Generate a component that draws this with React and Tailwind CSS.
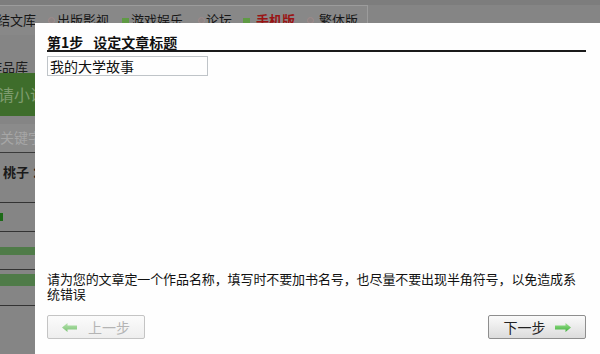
import React from "react";

const font = { fontFamily: '"Noto Sans CJK SC", "Noto Sans", sans-serif' };

function Circle({ ml }) {
  return <span className={`inline-block w-[7px] h-[7px] rounded-full border border-[#a08c8c] bg-[#8d8484] ${ml}`} />;
}
function Square({ ml }) {
  return <span className={`inline-block w-[7px] h-[6px] bg-[#5f9a44] ${ml}`} />;
}

function LeftArrow({ className }) {
  return (
    <svg width="15" height="9" viewBox="0 0 15 9" className={className}>
      <defs>
        <linearGradient id="lg1" x1="0" y1="0" x2="0" y2="1">
          <stop offset="0" stopColor="#b6e3b0" />
          <stop offset="1" stopColor="#7cc374" />
        </linearGradient>
      </defs>
      <path d="M0 4.5 L5.5 0 L5.5 2.5 L15 2.5 L15 6.5 L5.5 6.5 L5.5 9 Z" fill="url(#lg1)" />
    </svg>
  );
}
function RightArrow({ className }) {
  return (
    <svg width="16" height="9" viewBox="0 0 16 9" className={className}>
      <defs>
        <linearGradient id="lg2" x1="0" y1="0" x2="0" y2="1">
          <stop offset="0" stopColor="#9be28f" />
          <stop offset="1" stopColor="#3fae3a" />
        </linearGradient>
      </defs>
      <path d="M16 4.5 L10.5 0 L10.5 2.5 L0 2.5 L0 6.5 L10.5 6.5 L10.5 9 Z" fill="url(#lg2)" />
    </svg>
  );
}

export default function App() {
  return (
    <div className="relative w-[600px] h-[354px] overflow-hidden bg-[#858585]" style={font}>
      {/* background page */}
      <div className="h-[5px] bg-[#7d7d7d]" />
      <div className="w-[368px] h-[30px] bg-[#888888] border-t border-r border-[#9c9c9c] flex items-start pt-[6px] text-[13px] leading-[15px] text-[#161616] whitespace-nowrap">
        <span className="ml-[-3px]">结文库</span>
        <Circle ml="ml-[12px] mt-[5px]" />
        <span className="ml-[2px]">出版影视</span>
        <Square ml="ml-[13px] mt-[6px]" />
        <span className="ml-[2px]">游戏娱乐</span>
        <Circle ml="ml-[15px] mt-[5px]" />
        <span className="ml-[1px]">论坛</span>
        <Square ml="ml-[11px] mt-[6px]" />
        <span className="ml-[6px] font-bold text-[#9a1414]">手机版</span>
        <Circle ml="ml-[12px] mt-[5px]" />
        <span className="ml-[5px]">繁体版</span>
      </div>
      <div className="w-[40px] flex flex-col whitespace-nowrap overflow-hidden">
        <div className="h-[25px]" />
        <div className="h-[13px] text-[13px] leading-[13px] text-[#1c1c1c] ml-[-11px]">作品库 ·</div>
        <div className="h-[43px] bg-[#3e6d2b] text-[16px] leading-[18px] text-[#7f9c6e] pt-[12px]">
          <span className="ml-[-2px]">请小说</span>
        </div>
        <div className="h-[8px]" />
        <div className="h-[28px] bg-[#8b8b8b] text-[14px] leading-[16px] text-[#a6a6a6] pt-[5px]">关键字</div>
        <div className="h-px bg-[#3a3a3a]" />
        <div className="h-[49px] pt-[11px] text-[13px] leading-[15px] font-bold text-[#1a1a1a] pl-[3px]">桃子 ：</div>
        <div className="h-px bg-[#333333]" />
        <div className="h-[28px] flex items-center">
          <span className="block w-[3px] h-[8px] bg-[#1c6a17]" />
        </div>
        <div className="h-px bg-[#333333]" />
        <div className="h-[15px]" />
        <div className="h-[8px] bg-[#4f7b48]" />
        <div className="h-[14px]" />
        <div className="h-px bg-[#333333]" />
        <div className="h-[4px]" />
        <div className="h-[12px] bg-[#4f7b48]" />
        <div className="h-[19px]" />
        <div className="h-px bg-[#333333]" />
      </div>

      {/* dialog */}
      <div className="absolute left-[35px] top-[23px] right-0 bottom-0 bg-[#fefefe] pl-[12px] pr-[14px] pt-[11px]">
        <div className="text-[14px] leading-[16px] font-bold text-[#111] border-b-2 border-[#1a1a1a]">
          第1步<span className="ml-[10px]">设定文章标题</span>
        </div>
        <div className="mt-[4px] w-[161px] h-[20px] border border-[#bfc4c8] flex items-center pl-[2px] text-[14px] leading-[16px] text-[#111]">
          我的大学故事
        </div>
        <div className="mt-[195px] text-[13px] leading-[15px] tracking-[-0.1px] text-[#111] whitespace-nowrap">
          请为您的文章定一个作品名称，填写时不要加书名号，也尽量不要出现半角符号，以免造成系
          <br />
          统错误
        </div>
        <div className="mt-[14px] flex justify-between">
          <div className="w-[98px] h-[24px] border border-[#c4c4c4] rounded-[2px] bg-gradient-to-b from-[#fbfbfb] to-[#eeeeee] flex items-center justify-center gap-[11px]">
            <LeftArrow />
            <span className="text-[14px] leading-[16px] text-[#b4b4b4]">上一步</span>
          </div>
          <div className="w-[98px] h-[24px] border border-[#8e8e8e] rounded-[2px] bg-gradient-to-b from-[#fafafa] to-[#dcdcdc] flex items-center justify-center gap-[9px]">
            <span className="text-[14px] leading-[16px] text-[#222]">下一步</span>
            <RightArrow />
          </div>
        </div>
      </div>
    </div>
  );
}
